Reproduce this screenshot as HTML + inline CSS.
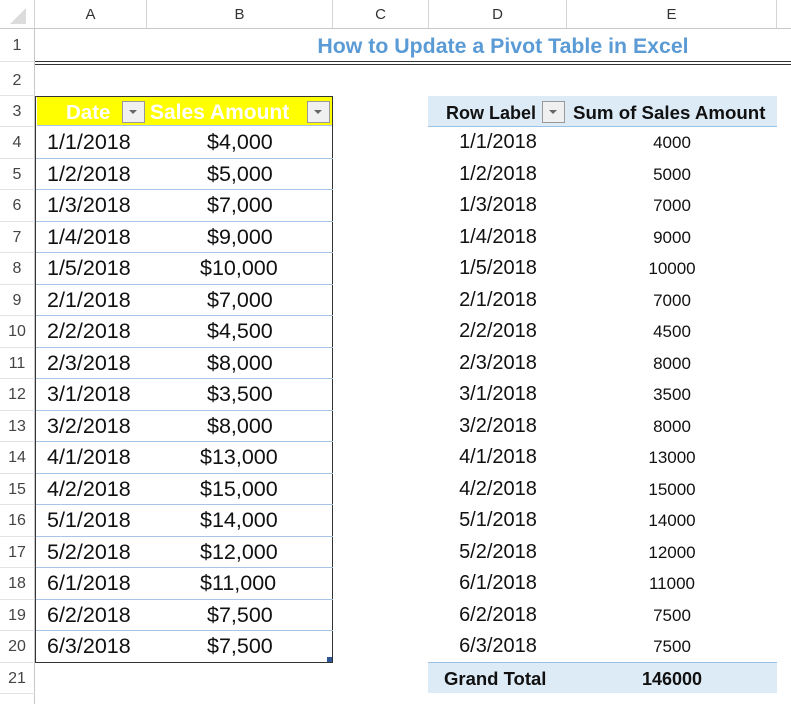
<!DOCTYPE html>
<html><head><meta charset="utf-8"><style>
*{margin:0;padding:0;box-sizing:border-box}
body{width:791px;height:702px;background:#fff;position:relative;overflow:hidden;font-family:"Liberation Sans",sans-serif;color:#111}
.a{position:absolute}
.ch{top:0;height:29px;border-right:1px solid #d4d4d4;border-bottom:1px solid #c8c8c8;background:#fff;color:#333;font-size:15px;text-align:center;line-height:29px}
.rn{left:0;width:35px;border-right:1px solid #c8c8c8;border-bottom:1px solid #e3e3e3;color:#444;font-size:16px;text-align:center}
.r{position:absolute;height:31.5px;line-height:31.5px}
.ld{left:36px;width:297px;border-bottom:1px solid #a9c6e8}
.ld span{position:absolute;font-size:21.5px}
.pv span{position:absolute;text-align:center}
.pv .d{left:0;width:140px;font-size:20px}
.pv .v{left:144px;width:200px;font-size:17px}
</style></head><body>
<div class="a ch" style="left:0;width:35px"><svg width="35" height="29"><polygon points="26,8 26,24 10,24" fill="#dcdcdc"/></svg></div>
<div class="a ch" style="left:35px;width:112px">A</div>
<div class="a ch" style="left:147px;width:186px">B</div>
<div class="a ch" style="left:333px;width:96px">C</div>
<div class="a ch" style="left:429px;width:138px">D</div>
<div class="a ch" style="left:567px;width:210px">E</div>
<div class="a ch" style="left:777px;width:14px;border-right:none"></div>

<div class="a rn" style="top:29px;height:33px;line-height:33px">1</div>
<div class="a rn" style="top:62px;height:34px;line-height:38px">2</div>
<div class="a rn" style="top:96px;height:31px;line-height:31px">3</div>
<div class="a" style="left:303px;top:29px;width:400px;height:33px;text-align:center;font-weight:bold;color:#5b9bd5;font-size:21.3px;line-height:34px;white-space:nowrap">How to Update a Pivot Table in Excel</div>
<div class="a" style="left:35px;top:61px;width:756px;height:4px;border-top:1px solid #333;border-bottom:1.5px solid #333"></div>

<div class="a" style="left:35px;top:96px;width:298px;height:567px;border:1.5px solid #333"></div>
<div class="a" style="left:37px;top:97px;width:295px;height:29px;background:#ffff00;border-bottom:1px solid #a9c6e8"></div>
<div class="a" style="left:66px;top:99px;color:#fff;font-weight:bold;font-size:20.5px;line-height:28px">Date</div>
<div class="a" style="left:150px;top:99px;color:#fff;font-weight:bold;font-size:21px;line-height:28px;white-space:nowrap">Sales Amount</div>
<div class="a" style="left:122px;top:101px;width:23px;height:22px;background:#f0f0f0;border:1px solid #999"><svg width="21" height="20"><polygon points="6,8 14,8 10,12" fill="#666"/></svg></div>
<div class="a" style="left:307px;top:101px;width:23px;height:22px;background:#f0f0f0;border:1px solid #999"><svg width="21" height="20"><polygon points="6,8 14,8 10,12" fill="#666"/></svg></div>
<div class="a" style="left:327px;top:657px;width:5px;height:5px;background:#2f5597"></div>

<div class="a" style="left:428px;top:96px;width:349px;height:31px;background:#ddebf7;border-bottom:1.5px solid #9bc2e6"></div>
<div class="a" style="left:446px;top:97px;font-weight:bold;font-size:18px;line-height:32px;white-space:nowrap">Row Label</div>
<div class="a" style="left:542px;top:101px;width:23px;height:22px;background:#f0f0f0;border:1px solid #999"><svg width="21" height="20"><polygon points="6,8 14,8 10,12" fill="#666"/></svg></div>
<div class="a" style="left:573px;top:97px;font-weight:bold;font-size:18.7px;line-height:32px;white-space:nowrap">Sum of Sales Amount</div>
<div class="a" style="left:428px;top:662px;width:349px;height:31px;background:#ddebf7;border-top:1.5px solid #9bc2e6"></div>
<div class="a" style="left:444px;top:664px;font-weight:bold;font-size:18.5px;line-height:30px;white-space:nowrap">Grand Total</div>
<div class="a" style="left:572px;top:664px;width:200px;text-align:center;font-weight:bold;font-size:18px;line-height:30px">146000</div>

<div class="a rn" style="top:127px;height:31.5px;line-height:31.5px">4</div>
<div class="a rn" style="top:158.5px;height:31.5px;line-height:31.5px">5</div>
<div class="a rn" style="top:190px;height:31.5px;line-height:31.5px">6</div>
<div class="a rn" style="top:221.5px;height:31.5px;line-height:31.5px">7</div>
<div class="a rn" style="top:253px;height:31.5px;line-height:31.5px">8</div>
<div class="a rn" style="top:284.5px;height:31.5px;line-height:31.5px">9</div>
<div class="a rn" style="top:316px;height:31.5px;line-height:31.5px">10</div>
<div class="a rn" style="top:347.5px;height:31.5px;line-height:31.5px">11</div>
<div class="a rn" style="top:379px;height:31.5px;line-height:31.5px">12</div>
<div class="a rn" style="top:410.5px;height:31.5px;line-height:31.5px">13</div>
<div class="a rn" style="top:442px;height:31.5px;line-height:31.5px">14</div>
<div class="a rn" style="top:473.5px;height:31.5px;line-height:31.5px">15</div>
<div class="a rn" style="top:505px;height:31.5px;line-height:31.5px">16</div>
<div class="a rn" style="top:536.5px;height:31.5px;line-height:31.5px">17</div>
<div class="a rn" style="top:568px;height:31.5px;line-height:31.5px">18</div>
<div class="a rn" style="top:599.5px;height:31.5px;line-height:31.5px">19</div>
<div class="a rn" style="top:631px;height:31.5px;line-height:31.5px">20</div>
<div class="a rn" style="top:662.5px;height:31.5px;line-height:31.5px">21</div>
<div class="a rn" style="top:694px;height:10px;border-bottom:none"></div>

<div class="r ld" style="top:127px"><span style="left:11px">1/1/2018</span><span style="left:171px">$4,000</span></div>
<div class="r ld" style="top:158.5px"><span style="left:11px">1/2/2018</span><span style="left:171px">$5,000</span></div>
<div class="r ld" style="top:190px"><span style="left:11px">1/3/2018</span><span style="left:171px">$7,000</span></div>
<div class="r ld" style="top:221.5px"><span style="left:11px">1/4/2018</span><span style="left:171px">$9,000</span></div>
<div class="r ld" style="top:253px"><span style="left:11px">1/5/2018</span><span style="left:164px">$10,000</span></div>
<div class="r ld" style="top:284.5px"><span style="left:11px">2/1/2018</span><span style="left:171px">$7,000</span></div>
<div class="r ld" style="top:316px"><span style="left:11px">2/2/2018</span><span style="left:171px">$4,500</span></div>
<div class="r ld" style="top:347.5px"><span style="left:11px">2/3/2018</span><span style="left:171px">$8,000</span></div>
<div class="r ld" style="top:379px"><span style="left:11px">3/1/2018</span><span style="left:171px">$3,500</span></div>
<div class="r ld" style="top:410.5px"><span style="left:11px">3/2/2018</span><span style="left:171px">$8,000</span></div>
<div class="r ld" style="top:442px"><span style="left:11px">4/1/2018</span><span style="left:164px">$13,000</span></div>
<div class="r ld" style="top:473.5px"><span style="left:11px">4/2/2018</span><span style="left:164px">$15,000</span></div>
<div class="r ld" style="top:505px"><span style="left:11px">5/1/2018</span><span style="left:164px">$14,000</span></div>
<div class="r ld" style="top:536.5px"><span style="left:11px">5/2/2018</span><span style="left:164px">$12,000</span></div>
<div class="r ld" style="top:568px"><span style="left:11px">6/1/2018</span><span style="left:164px">$11,000</span></div>
<div class="r ld" style="top:599.5px"><span style="left:11px">6/2/2018</span><span style="left:171px">$7,500</span></div>
<div class="r ld" style="top:631px;border-bottom:none"><span style="left:11px">6/3/2018</span><span style="left:171px">$7,500</span></div>

<div class="pv">
<div class="r" style="top:127px;left:428px;width:349px"><span class="d">1/1/2018</span><span class="v">4000</span></div>
<div class="r" style="top:158.5px;left:428px;width:349px"><span class="d">1/2/2018</span><span class="v">5000</span></div>
<div class="r" style="top:190px;left:428px;width:349px"><span class="d">1/3/2018</span><span class="v">7000</span></div>
<div class="r" style="top:221.5px;left:428px;width:349px"><span class="d">1/4/2018</span><span class="v">9000</span></div>
<div class="r" style="top:253px;left:428px;width:349px"><span class="d">1/5/2018</span><span class="v">10000</span></div>
<div class="r" style="top:284.5px;left:428px;width:349px"><span class="d">2/1/2018</span><span class="v">7000</span></div>
<div class="r" style="top:316px;left:428px;width:349px"><span class="d">2/2/2018</span><span class="v">4500</span></div>
<div class="r" style="top:347.5px;left:428px;width:349px"><span class="d">2/3/2018</span><span class="v">8000</span></div>
<div class="r" style="top:379px;left:428px;width:349px"><span class="d">3/1/2018</span><span class="v">3500</span></div>
<div class="r" style="top:410.5px;left:428px;width:349px"><span class="d">3/2/2018</span><span class="v">8000</span></div>
<div class="r" style="top:442px;left:428px;width:349px"><span class="d">4/1/2018</span><span class="v">13000</span></div>
<div class="r" style="top:473.5px;left:428px;width:349px"><span class="d">4/2/2018</span><span class="v">15000</span></div>
<div class="r" style="top:505px;left:428px;width:349px"><span class="d">5/1/2018</span><span class="v">14000</span></div>
<div class="r" style="top:536.5px;left:428px;width:349px"><span class="d">5/2/2018</span><span class="v">12000</span></div>
<div class="r" style="top:568px;left:428px;width:349px"><span class="d">6/1/2018</span><span class="v">11000</span></div>
<div class="r" style="top:599.5px;left:428px;width:349px"><span class="d">6/2/2018</span><span class="v">7500</span></div>
<div class="r" style="top:631px;left:428px;width:349px"><span class="d">6/3/2018</span><span class="v">7500</span></div>
</div>
</body></html>
